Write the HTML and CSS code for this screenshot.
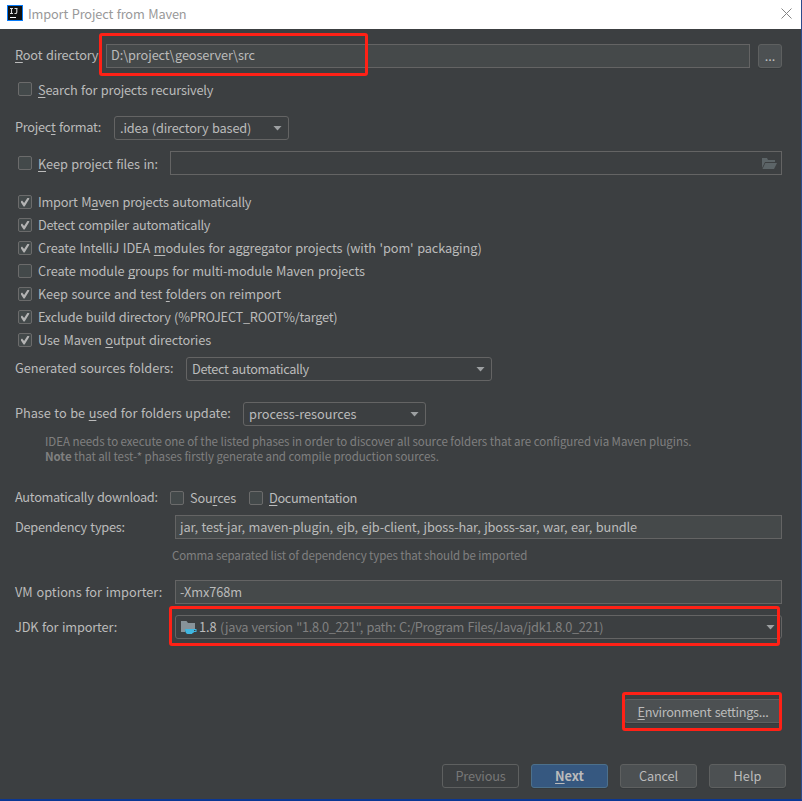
FILE: index.html
```html
<!DOCTYPE html>
<html lang="en">
<head>
<meta charset="utf-8">
<title>Import Project from Maven</title>
<link rel="stylesheet" href="styles.css">
</head>
<body>
<div class="window">
  <header class="titlebar">
    <svg class="logo" width="16" height="16" viewBox="0 0 16 16"><rect width="16" height="16" fill="#087cfa"/><rect x="1" y="1" width="14" height="14" fill="#111"/><path d="M3 3.5h3M4.500 3.500v5M3 8.500h3M7.500 3.500h3M9.800 3.500v3.700q0 1.300-1.300 1.300H7.500" fill="none" stroke="#ddd" stroke-width="1.100"/><path d="M3 12.500h6" stroke="#fff"/></svg>
    <span class="title k14">Import Project from Maven</span>
    <svg class="close" width="11" height="11" viewBox="0 0 11 11"><path d="M.5.5l10 10M10.5.5l-10 10" stroke="#858585" fill="none"/></svg>
  </header>
  <main class="form">
    <div class="row row-root">
      <label class="up k17 w-root"><u>R</u>oot directory:</label>
      <div class="field path-field grow k9">D:\project\geoserver\src</div>
      <button class="btn browse">...</button>
      <i class="mark mark-root"></i>
    </div>
    <div class="row row-search"><i class="box"></i><span class="down k19"><u>S</u>earch for projects recursively</span></div>
    <div class="row row-format">
      <label class="up k27 w-format">Projec<u>t</u> format:</label>
      <div class="select sel-format"><span class="k16">.idea (directory based)</span><i class="arrow"></i></div>
    </div>
    <div class="row row-keep">
      <i class="box"></i><span class="down k13 w-keep"><u>K</u>eep project files in:</span>
      <div class="field off grow"><svg class="folder" width="15" height="11" viewBox="0 0 15 11"><path d="M0 10V0h5l1 2h7v2H3z" fill="#5c6467"/><path d="M3.3 5H15l-3 6H.5z" fill="#5c6467"/></svg></div>
    </div>
    <div class="checks">
      <div class="check"><i class="box on"></i><span class="k22">Import M<u>a</u>ven projects automatically</span></div>
      <div class="check"><i class="box on"></i><span class="k29">Detect compiler automatically</span></div>
      <div class="check"><i class="box on"></i><span class="k12">Create IntelliJ IDEA <u>m</u>odules for aggregator projects (with 'pom' packaging)</span></div>
      <div class="check"><i class="box"></i><span class="k13">Create module <u>g</u>roups for multi-module Maven projects</span></div>
      <div class="check"><i class="box on"></i><span class="k9">Keep source and test <u>f</u>olders on reimport</span></div>
      <div class="check"><i class="box on"></i><span class="k24">Exclude build directory (%PROJECT_ROOT%/target)</span></div>
      <div class="check"><i class="box on"></i><span class="k13">Use Maven <u>o</u>utput directories</span></div>
    </div>
    <div class="row row-gen">
      <label class="up k4 w-gen">Generated sources folders:</label>
      <div class="select sel-gen"><span class="k36">Detect automatically</span><i class="arrow"></i></div>
    </div>
    <div class="row row-phase">
      <label class="up k7 w-phase">Phase to be <u>u</u>sed for folders update:</label>
      <div class="select sel-phase"><span>process-resources</span><i class="arrow"></i></div>
    </div>
    <div class="note">
      <p class="k4">IDEA needs to execute one of the listed phases in order to discover all source folders that are configured via Maven plugins.</p>
      <p class="k7"><b>Note</b> that all test-* phases firstly generate and compile production sources.</p>
    </div>
    <div class="row row-download">
      <label class="up k29 w-download">Automatically download:</label>
      <i class="box"></i><span class="k16 w-sources">Sou<u>r</u>ces</span>
      <i class="box"></i><span class="k36"><u>D</u>ocumentation</span>
    </div>
    <div class="row row-deps">
      <label class="k27 w-wide">Dependency types:</label>
      <div class="field grow k13">jar, test-jar, maven-plugin, ejb, ejb-client, jboss-har, jboss-sar, war, ear, bundle</div>
    </div>
    <p class="hint k12">Comma separated list of dependency types that should be imported</p>
    <div class="row row-vm">
      <label class="w-wide">VM options for importer:</label>
      <div class="field grow k7">-Xmx768m</div>
    </div>
    <div class="row row-jdk">
      <label class="k14 w-wide">JDK for importer:</label>
      <div class="select grow sel-jdk">
        <svg width="16" height="15" viewBox="0 0 16 15"><path d="M0 1h5.5l1.5 2h7v6H4v3H0z" fill="#87939a"/><path d="M4 9h11.500v3H13q-.5 1.200-2 1.600v.4H6.500q-2.500-.8-2.500-5z" fill="#40b6e0"/><path d="M13 10h1.500v1H13z" fill="#3c3f41"/></svg>
        <span class="ver">1.8</span><span class="path k32">(java version "1.8.0_221", path: C:/Program Files/Java/jdk1.8.0_221)</span><i class="arrow"></i>
      </div>
      <i class="mark mark-jdk"></i>
    </div>
    <div class="row row-env">
      <button class="btn env k32"><u>E</u>nvironment settings...</button>
      <i class="mark mark-env"></i>
    </div>
    <footer class="row actions">
      <button class="btn disabled k20">Previous</button>
      <button class="btn primary"><u>N</u>ext</button>
      <button class="btn k20">Cancel</button>
      <button class="btn">Help</button>
    </footer>
  </main>
</div>
</body>
</html>
```
FILE: styles.css
```css
* { box-sizing: border-box; }
body { margin: 0; overflow: hidden; }
.window {
  width: 802px; height: 801px;
  background: #3c3f41; color: #bbb;
  border-right: 1px solid #2b4a8c; border-bottom: 2px solid #0a3794;
  font: 12.75px/18px "Noto Sans CJK SC", "Noto Sans", sans-serif;
  word-spacing: .9px;
  white-space: nowrap;
}
p { margin: 0; }
u { text-decoration: underline; text-underline-offset: 2px; text-decoration-thickness: 1px; text-decoration-skip-ink: none; }

.titlebar { display: flex; align-items: center; height: 29px; padding: 0 9px 3px 7px; background: #fff; color: #999; }
.title { margin-left: 5px; flex: 1; padding-top: 1px; }

.form { padding: 15px 19px 0 15px; }
.row { position: relative; display: flex; align-items: center; height: 24px; }
.grow { flex: 1; }
.up { padding-bottom: 2px; }
.down { padding-top: 1px; }
.row-search { margin-top: 9px; }
.row-format { margin-top: 15px; }
.row-keep { margin-top: 11px; }
.checks { margin-top: 15px; }
.row-gen { margin-top: 6px; }
.row-phase { margin-top: 21px; }
.row-download { margin-top: 22px; }
.row-deps { margin-top: 5px; }
.row-vm { margin-top: 16px; }
.row-jdk { margin-top: 11px; }
.row-env { margin-top: 60px; justify-content: flex-end; }
.actions { margin-top: 41px; margin-right: -4px; gap: 12px; justify-content: flex-end; }

.w-root { width: 91px; }
.w-format { width: 99px; }
.w-keep { width: 132px; }
.w-gen { width: 171px; }
.w-phase { width: 228px; }
.w-download { width: 155px; }
.w-sources { width: 59px; }
.w-wide { width: 160px; }

.field { height: 24px; padding: 0 4px; line-height: 22px; border: 1px solid #646464; background: #45494a; }
.path-field { line-height: 20px; }
.field.off { display: flex; align-items: center; justify-content: flex-end; background: #3c3f41; }
.select { display: flex; align-items: center; height: 24px; padding: 0 6px 0 5px; border: 1px solid #646464; border-radius: 3px; }
.sel-format { width: 175px; }
.sel-gen { width: 306px; }
.sel-phase { width: 183px; }
.arrow { margin-left: auto; width: 9px; height: 5px; background: #9da0a2; clip-path: polygon(0 0, 100% 0, 50% 100%); }
.ver { width: 21px; margin-left: 2px; }
.path { color: #808080; }

.box { flex: none; width: 14px; height: 14px; margin: 0 6px 0 3px; border: 1px solid #6b6b6b; border-radius: 2px; background: #43494a; }
.row-download .box { margin-left: 0; }
.check { display: flex; align-items: center; height: 23px; padding-top: 1px; }
.box.on { display: grid; place-items: center; }
.box.on::after { content: ""; width: 9px; height: 9px; background: #b4b4b4; clip-path: polygon(0 47%, 17% 34%, 40% 62%, 80% 0, 100% 10%, 46% 100%, 34% 100%); }

.note { margin: 8px 0 0 30px; color: #808080; font-size: 11.5px; line-height: 15px; word-spacing: 0; }
.hint { margin: 8px 0 0 157px; height: 17px; color: #808080; font-size: 11.5px; line-height: 17px; word-spacing: 0; }

.btn { width: 77px; height: 24px; padding: 0; border: 1px solid #5e6060; border-radius: 3px; background: #4c5052; color: #bbb; font: inherit; line-height: 22px; box-shadow: 0 1px 0 #363a3c; }
.browse { width: 24px; margin-left: 8px; }
.env { width: 158px; padding-top: 1px; line-height: 21px; word-spacing: .9px; }
.disabled { background: transparent; color: #777; box-shadow: none; }
.primary { background: #365880; border-color: #4c708c; font-weight: 700; }

.mark { position: absolute; border: 3px solid #ff2116; border-radius: 3px; }
.mark-root { left: 84px; top: -11px; width: 269px; height: 43px; }
.mark-jdk { left: 154px; top: -9px; width: 611px; height: 40px; }
.mark-env { right: 0; top: -7px; width: 160px; height: 39px; }

/* letter tracking, in hundredths of a pixel */
.k4 { letter-spacing: -.04px; }
.k7 { letter-spacing: -.07px; }
.k9 { letter-spacing: -.09px; }
.k12 { letter-spacing: -.12px; }
.k13 { letter-spacing: -.13px; }
.k14 { letter-spacing: -.14px; }
.k16 { letter-spacing: -.16px; }
.k17 { letter-spacing: -.17px; }
.k19 { letter-spacing: -.19px; }
.k20 { letter-spacing: -.2px; }
.k22 { letter-spacing: -.22px; }
.k24 { letter-spacing: -.24px; }
.k27 { letter-spacing: -.27px; }
.k29 { letter-spacing: -.29px; }
.k32 { letter-spacing: -.32px; }
.k36 { letter-spacing: -.36px; }
```
